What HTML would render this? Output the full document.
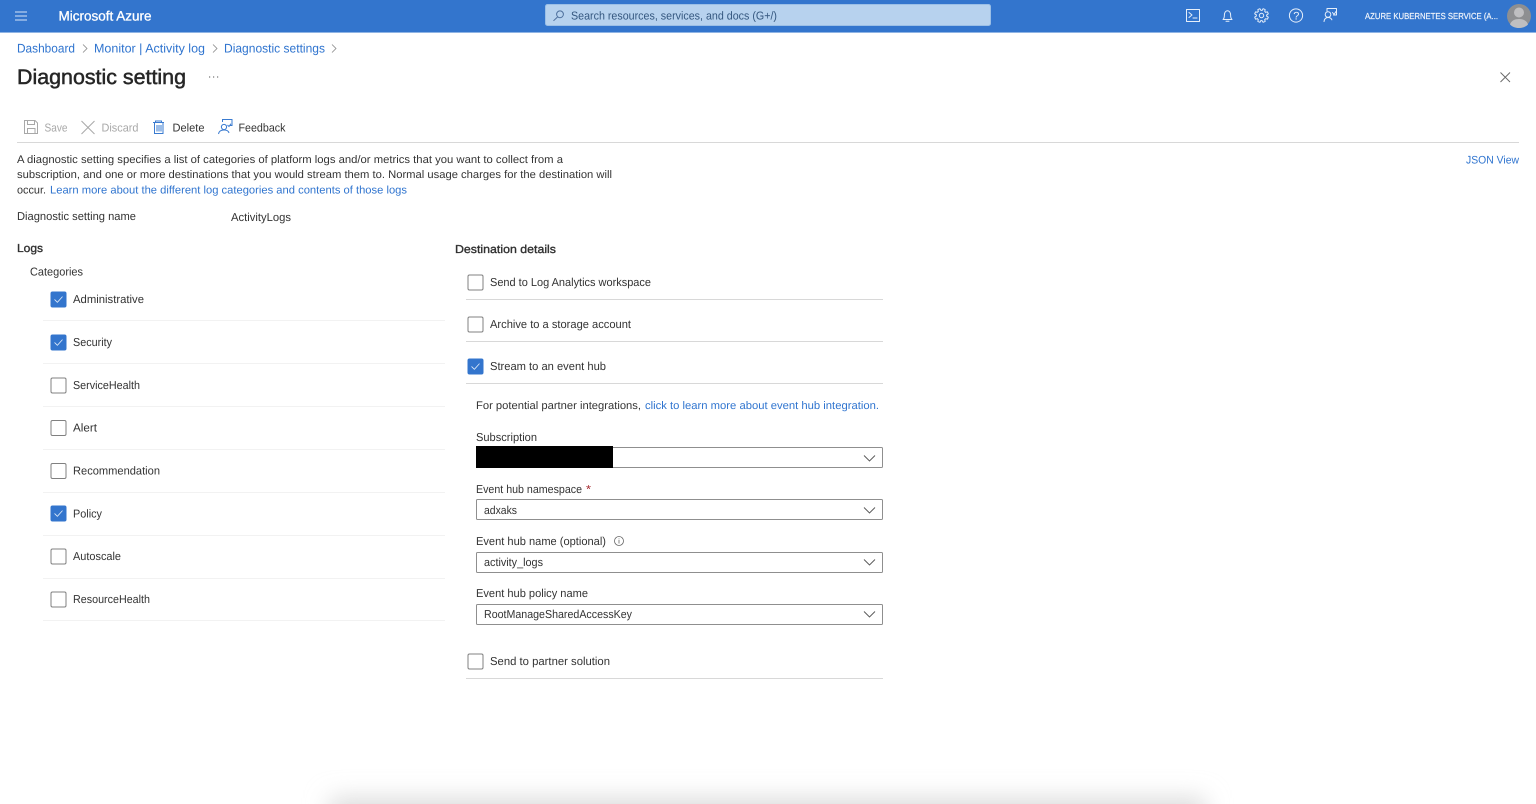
<!DOCTYPE html>
<html lang="en">
<head>
<meta charset="utf-8">
<title>Diagnostic setting - Microsoft Azure</title>
<style>
html,body{margin:0;padding:0;width:1536px;height:804px;overflow:hidden;background:#fff}
svg{display:block;position:absolute;left:0;top:0;filter:blur(.3px)}
text{font-family:"Liberation Sans",sans-serif;font-size:11.5px;fill:#333;text-rendering:geometricPrecision}
.l{fill:#2f74cf}
.b{stroke:#2e2e2e;stroke-width:.35px}
.g{fill:#a8a8a8}
.line{stroke:#f2f2f2;stroke-width:1}
.dline{stroke:#d8d8d8;stroke-width:1}
.chk{fill:#fff;stroke:#808080;stroke-width:1}
.on{fill:#3375cd;stroke:#3375cd;stroke-width:1}
.tick{fill:none;stroke:#dce9f8;stroke-width:.9;stroke-linecap:round;stroke-linejoin:round}
.box{fill:#fff;stroke:#8f8f8f;stroke-width:1}
.chev{fill:none;stroke:#555;stroke-width:.9}
.ti{fill:none;stroke:#e6effa;stroke-width:1;stroke-linecap:round;stroke-linejoin:round}
.bc{fill:none;stroke:#888;stroke-width:.8}
</style>
</head>
<body>
<svg width="1536" height="804" viewBox="0 0 1536 804" xmlns="http://www.w3.org/2000/svg">
<defs>
<filter id="s" filterUnits="userSpaceOnUse" x="240" y="740" width="1060" height="140"><feGaussianBlur stdDeviation="12"/></filter>
<symbol id="c" viewBox="0 0 16 16"><path class="tick" d="M4 8.2l2.8 2.8L12 5.2"/></symbol>
</defs>

<!-- bottom shadow -->
<rect x="330" y="798" width="875" height="42" fill="#dbdbdb" filter="url(#s)"/>

<!-- top bar -->
<rect x="0" y="0" width="1536" height="32" fill="#3375cd"/>
<rect x="0" y="32" width="1536" height="1" fill="#8fb4e4"/>
<path d="M15 12h12M15 16h12M15 20h12" stroke="#d5e3f6" stroke-width="1.100" fill="none"/>
<text x="58.500" y="20.500" style="font-size:13.500px;fill:#fff;stroke:#fff;stroke-width:.3px" textLength="93" lengthAdjust="spacingAndGlyphs">Microsoft Azure</text>

<rect x="545.500" y="4.500" width="445" height="21" rx="2" fill="#b7d2ee" stroke="#9bbfe6"/>
<circle cx="560" cy="14.300" r="3.400" fill="none" stroke="#4d6f9c"/>
<path d="M557.500 17l-4 3.800" stroke="#4d6f9c" fill="none"/>
<text x="571" y="19.500" style="fill:#34577f;font-size:11.500px" textLength="206" lengthAdjust="spacingAndGlyphs">Search resources, services, and docs (G+/)</text>

<!-- top right icons -->
<rect x="1186.500" y="9.500" width="13" height="12" class="ti"/>
<path class="ti" d="M1189 12.500l3 2.500-3 2.500M1193 18h4"/>
<path class="ti" d="M1223 19.500c1.200-1 1.400-2 1.400-4.500 0-2.300 1.200-4.300 3.100-4.300s3.100 2 3.100 4.300c0 2.500.2 3.500 1.400 4.500zM1226 21.300h3"/>
<g transform="translate(1261.500 15.500) rotate(22.500)">
<path class="ti" d="M5-1.430L6.900-1.100V1.100L5 1.430 4.550 2.520"/>
<path class="ti" transform="rotate(45)" d="M5-1.430L6.900-1.100V1.100L5 1.430 4.550 2.520"/>
<path class="ti" transform="rotate(90)" d="M5-1.430L6.900-1.100V1.100L5 1.430 4.550 2.520"/>
<path class="ti" transform="rotate(135)" d="M5-1.430L6.900-1.100V1.100L5 1.430 4.550 2.520"/>
<path class="ti" transform="rotate(180)" d="M5-1.430L6.900-1.100V1.100L5 1.430 4.550 2.520"/>
<path class="ti" transform="rotate(225)" d="M5-1.430L6.900-1.100V1.100L5 1.430 4.550 2.520"/>
<path class="ti" transform="rotate(270)" d="M5-1.430L6.900-1.100V1.100L5 1.430 4.550 2.520"/>
<path class="ti" transform="rotate(315)" d="M5-1.430L6.900-1.100V1.100L5 1.430 4.550 2.520"/>
<circle class="ti" cx="0" cy="0" r="2.200"/>
</g>
<circle class="ti" cx="1296" cy="15.500" r="6.600"/>
<text x="1293.200" y="19.500" style="font-size:11px;fill:#eef4fc">?</text>
<circle class="ti" cx="1328" cy="14.500" r="2.800"/>
<path class="ti" d="M1324 21.500c.4-2.700 2-4 4-4s3.300.8 3.900 2.300M1327 11V8.500h9.500v6.500h-3M1332.500 12.500l1.500 2 2-3"/>
<text x="1365" y="19" style="font-size:8.800px;fill:#f2f6fc;stroke:#f2f6fc;stroke-width:.2px" textLength="133" lengthAdjust="spacingAndGlyphs">AZURE KUBERNETES SERVICE (A...</text>
<circle cx="1519" cy="16" r="12" fill="#8e8f91"/>
<circle cx="1519" cy="12.500" r="5" fill="#bfbfc1"/>
<path d="M1510 24.500c1.200-4 5-5.500 9-5.500s7.800 1.500 9 5.500c-2.200 2.200-5.400 3.500-9 3.500s-6.800-1.300-9-3.500z" fill="#bfbfc1"/>

<!-- breadcrumb -->
<text class="l" x="17" y="52.500" style="font-size:12.500px" textLength="58" lengthAdjust="spacingAndGlyphs">Dashboard</text>
<path class="bc" d="M83 44.500l4 4-4 4"/>
<text class="l" x="94" y="52.500" style="font-size:12.500px" textLength="111" lengthAdjust="spacingAndGlyphs">Monitor | Activity log</text>
<path class="bc" d="M213 44.500l4 4-4 4"/>
<text class="l" x="224" y="52.500" style="font-size:12.500px" textLength="101" lengthAdjust="spacingAndGlyphs">Diagnostic settings</text>
<path class="bc" d="M332 44.500l4 4-4 4"/>

<!-- title -->
<text x="17" y="84" style="font-size:21px;fill:#262626;stroke:#262626;stroke-width:.5px" textLength="169" lengthAdjust="spacingAndGlyphs">Diagnostic setting</text>
<path d="M209 77h1.200M213 77h1.200M217 77h1.200" stroke="#555" fill="none"/>
<path d="M1500.500 72.500l9.500 9.500M1510 72.500l-9.500 9.500" stroke="#666" stroke-width=".9" fill="none"/>

<!-- toolbar -->
<g fill="none" stroke="#a8a8a8">
<path d="M24.500 120.500h10.500l2.500 2.500v10.500h-13z"/>
<path d="M27.500 120.500v4h7v-4M27.500 133.500v-5h7.500v5"/>
</g>
<text class="g" x="44.500" y="131.500" textLength="23" lengthAdjust="spacingAndGlyphs">Save</text>
<path d="M81.500 121l13 13M94.500 121l-13 13" stroke="#a8a8a8" fill="none"/>
<text class="g" x="101.500" y="131.500" textLength="37" lengthAdjust="spacingAndGlyphs">Discard</text>
<g fill="none" stroke="#3a7bd0">
<path d="M153 122.500h11M155.500 122.500v-1.500h6v1.500M154.500 122.500v11h8.500v-11M157 125v6.500M159 125v6.500M161 125v6.500"/>
</g>
<text x="172.500" y="131.500" textLength="32" lengthAdjust="spacingAndGlyphs">Delete</text>
<g fill="none" stroke="#3a7bd0">
<circle cx="224" cy="127" r="2.600"/>
<path d="M218.500 134c.4-2.700 2.700-4 5.500-4s4.600 1 5 3M222.500 122v-2.500h9.500v6h-2.500M227.500 125l1.500 1.500 2-2.800"/>
</g>
<text x="238.500" y="131.500" textLength="47" lengthAdjust="spacingAndGlyphs">Feedback</text>
<line class="dline" x1="17" y1="142.500" x2="1519" y2="142.500"/>

<!-- description -->
<text x="17" y="163" style="font-size:11px" textLength="546" lengthAdjust="spacingAndGlyphs">A diagnostic setting specifies a list of categories of platform logs and/or metrics that you want to collect from a</text>
<text x="17" y="178" style="font-size:11px" textLength="595" lengthAdjust="spacingAndGlyphs">subscription, and one or more destinations that you would stream them to. Normal usage charges for the destination will</text>
<text x="17" y="193.500" style="font-size:11px" textLength="29" lengthAdjust="spacingAndGlyphs">occur.</text>
<text class="l" x="50" y="193.500" style="font-size:11px" textLength="357" lengthAdjust="spacingAndGlyphs">Learn more about the different log categories and contents of those logs</text>
<text class="l" x="1466" y="163.500" style="font-size:11px" textLength="53" lengthAdjust="spacingAndGlyphs">JSON View</text>

<text x="17" y="220" textLength="119" lengthAdjust="spacingAndGlyphs">Diagnostic setting name</text>
<text x="231" y="221" textLength="60" lengthAdjust="spacingAndGlyphs">ActivityLogs</text>

<!-- logs -->
<text class="b" x="17" y="252" textLength="26" lengthAdjust="spacingAndGlyphs">Logs</text>
<text x="30" y="275.500" textLength="53" lengthAdjust="spacingAndGlyphs">Categories</text>

<rect class="on" x="51" y="292" width="15" height="15" rx="1.500"/><use href="#c" x="51" y="292" width="15" height="15"/>
<text x="73" y="303" textLength="71" lengthAdjust="spacingAndGlyphs">Administrative</text>
<line class="line" x1="43" y1="320.500" x2="445" y2="320.500"/>

<rect class="on" x="51" y="335" width="15" height="15" rx="1.500"/><use href="#c" x="51" y="335" width="15" height="15"/>
<text x="73" y="346" textLength="39" lengthAdjust="spacingAndGlyphs">Security</text>
<line class="line" x1="43" y1="363.500" x2="445" y2="363.500"/>

<rect class="chk" x="51" y="378" width="15" height="15" rx="1.500"/>
<text x="73" y="389" textLength="67" lengthAdjust="spacingAndGlyphs">ServiceHealth</text>
<line class="line" x1="43" y1="406.500" x2="445" y2="406.500"/>

<rect class="chk" x="51" y="420.500" width="15" height="15" rx="1.500"/>
<text x="73" y="431.500" textLength="24" lengthAdjust="spacingAndGlyphs">Alert</text>
<line class="line" x1="43" y1="449.500" x2="445" y2="449.500"/>

<rect class="chk" x="51" y="463.500" width="15" height="15" rx="1.500"/>
<text x="73" y="474.500" textLength="87" lengthAdjust="spacingAndGlyphs">Recommendation</text>
<line class="line" x1="43" y1="492.500" x2="445" y2="492.500"/>

<rect class="on" x="51" y="506" width="15" height="15" rx="1.500"/><use href="#c" x="51" y="506" width="15" height="15"/>
<text x="73" y="517.500" textLength="29" lengthAdjust="spacingAndGlyphs">Policy</text>
<line class="line" x1="43" y1="535.500" x2="445" y2="535.500"/>

<rect class="chk" x="51" y="549" width="15" height="15" rx="1.500"/>
<text x="73" y="560" textLength="48" lengthAdjust="spacingAndGlyphs">Autoscale</text>
<line class="line" x1="43" y1="578.500" x2="445" y2="578.500"/>

<rect class="chk" x="51" y="592" width="15" height="15" rx="1.500"/>
<text x="73" y="603" textLength="77" lengthAdjust="spacingAndGlyphs">ResourceHealth</text>
<line class="line" x1="43" y1="620.500" x2="445" y2="620.500"/>

<!-- destination -->
<text class="b" x="455" y="253" textLength="101" lengthAdjust="spacingAndGlyphs">Destination details</text>

<rect class="chk" x="468" y="275" width="15" height="15" rx="1.500"/>
<text x="490" y="286" textLength="161" lengthAdjust="spacingAndGlyphs">Send to Log Analytics workspace</text>
<line class="dline" x1="466" y1="299.500" x2="883" y2="299.500"/>

<rect class="chk" x="468" y="317" width="15" height="15" rx="1.500"/>
<text x="490" y="328" textLength="141" lengthAdjust="spacingAndGlyphs">Archive to a storage account</text>
<line class="dline" x1="466" y1="341.500" x2="883" y2="341.500"/>

<rect class="on" x="468" y="359" width="15" height="15" rx="1.500"/><use href="#c" x="468" y="359" width="15" height="15"/>
<text x="490" y="370" textLength="116" lengthAdjust="spacingAndGlyphs">Stream to an event hub</text>
<line class="dline" x1="466" y1="383.500" x2="883" y2="383.500"/>

<text x="476" y="409" style="font-size:11px" textLength="165" lengthAdjust="spacingAndGlyphs">For potential partner integrations,</text>
<text class="l" x="645" y="409" style="font-size:11px" textLength="234" lengthAdjust="spacingAndGlyphs">click to learn more about event hub integration.</text>

<text x="476" y="441" textLength="61" lengthAdjust="spacingAndGlyphs">Subscription</text>
<rect class="box" x="476.500" y="447.500" width="406" height="20" rx="1"/>
<rect x="476" y="446" width="137" height="22" fill="#000"/>
<path class="chev" d="M864 455.500l5.500 5.500 5.500-5.500"/>

<text x="476" y="493" textLength="106" lengthAdjust="spacingAndGlyphs">Event hub namespace</text>
<text x="586" y="493" style="fill:#a4262c" textLength="5" lengthAdjust="spacingAndGlyphs">*</text>
<rect class="box" x="476.500" y="499.500" width="406" height="20" rx="1"/>
<text x="484" y="514" textLength="33" lengthAdjust="spacingAndGlyphs">adxaks</text>
<path class="chev" d="M864 507.500l5.500 5.500 5.500-5.500"/>

<text x="476" y="545" textLength="130" lengthAdjust="spacingAndGlyphs">Event hub name (optional)</text>
<circle cx="619" cy="541" r="4.500" fill="none" stroke="#666" stroke-width=".8"/>
<path d="M619 540v3.500M619 538.500v.8" stroke="#666" stroke-width=".8" fill="none"/>
<rect class="box" x="476.500" y="552.500" width="406" height="20" rx="1"/>
<text x="484" y="566" textLength="59" lengthAdjust="spacingAndGlyphs">activity_logs</text>
<path class="chev" d="M864 559.500l5.500 5.500 5.500-5.500"/>

<text x="476" y="597" textLength="112" lengthAdjust="spacingAndGlyphs">Event hub policy name</text>
<rect class="box" x="476.500" y="604.500" width="406" height="20" rx="1"/>
<text x="484" y="618" textLength="148" lengthAdjust="spacingAndGlyphs">RootManageSharedAccessKey</text>
<path class="chev" d="M864 611.500l5.500 5.500 5.500-5.500"/>

<rect class="chk" x="468" y="654" width="15" height="15" rx="1.500"/>
<text x="490" y="665" textLength="120" lengthAdjust="spacingAndGlyphs">Send to partner solution</text>
<line class="dline" x1="466" y1="678.500" x2="883" y2="678.500"/>
</svg>
</body>
</html>
